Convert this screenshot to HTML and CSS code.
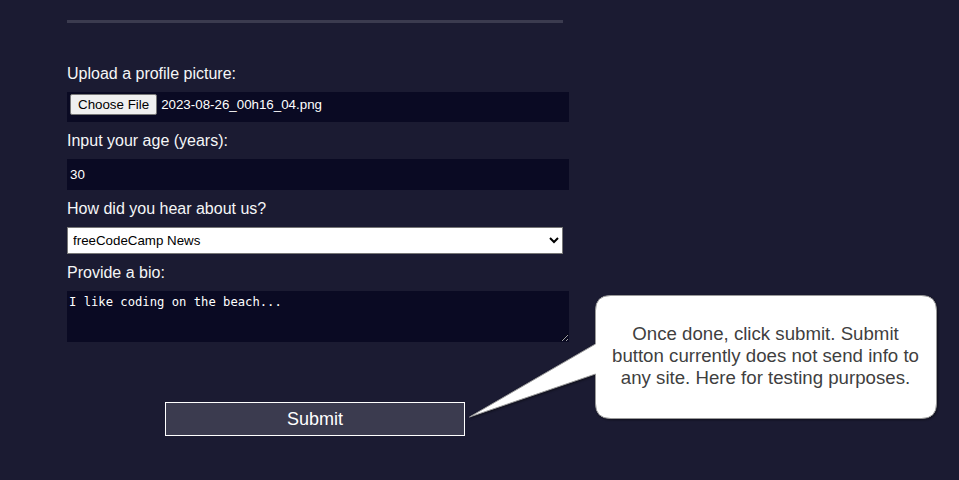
FILE: index.html
```html
<!DOCTYPE html>
<html lang="en">
<head>
<meta charset="utf-8">
<title>Survey form</title>
<link rel="stylesheet" href="styles.css">
</head>
<body>
<main class="page">
  <form class="form">
    <hr class="rule">
    <div class="field first">
      <label class="label">Upload a profile picture:</label>
      <div class="file">
        <span class="file-btn">Choose File</span>
        <span class="file-name">2023-08-26_00h16_04.png</span>
      </div>
    </div>
    <div class="field">
      <label class="label" for="age">Input your age (years):</label>
      <input class="dark-input" id="age" type="text" value="30">
    </div>
    <div class="field">
      <label class="label" for="ref">How did you hear about us?</label>
      <select class="select" id="ref">
        <option>freeCodeCamp News</option>
      </select>
    </div>
    <div class="field">
      <label class="label" for="bio">Provide a bio:</label>
      <textarea class="bio" id="bio">I like coding on the beach...</textarea>
    </div>
    <button class="submit" type="button">Submit</button>
  </form>
  <div class="callout">
    <svg class="callout-shape" width="485" height="135" viewBox="0 0 485 135">
      <path d="M150.5,5.5 H461.5 Q476.5,5.5 476.5,20.5 V113.5 Q476.5,128.5 461.5,128.5 H150.5 Q135.5,128.5 135.5,113.5 V84 L9.5,127 L135.5,54 V20.5 Q135.5,5.5 150.5,5.5 Z" fill="#ffffff" stroke="#9a9a9a" stroke-width="1"/>
    </svg>
    <p class="callout-text">Once done, click submit. Submit button currently does not send info to any site. Here for testing purposes.</p>
  </div>
</main>
</body>
</html>
```

FILE: styles.css
```css
html, body {
  margin: 0;
  padding: 0;
}

body {
  background: #1b1b32;
  font-family: "Liberation Sans", Arial, sans-serif;
  color: #f5f6f7;
  height: 480px;
  overflow: hidden;
}

.page {
  position: relative;
  padding: 20px 0 0 67px;
}

.form {
  width: 496px;
}

.rule {
  margin: 0;
  border: none;
  height: 3px;
  background: #3b3b4f;
}

.field {
  margin-bottom: 10px;
}

.field.first {
  margin-top: 42px;
}

.label {
  display: block;
  font-size: 16px;
  line-height: 18px;
  margin-bottom: 9px;
  color: #f5f6f7;
}

.file {
  width: 502px;
  height: 30px;
  box-sizing: border-box;
  background: #0a0a23;
  display: flex;
  align-items: flex-start;
  padding: 2px 0 0 3px;
  gap: 4px;
}

.file-btn {
  display: inline-block;
  box-sizing: border-box;
  height: 21px;
  line-height: 19px;
  padding: 0 7px;
  font-size: 13.33px;
  color: #000;
  background: #efefef;
  border: 1px solid #767676;
  border-radius: 2px;
}

.file-name {
  font-size: 13.33px;
  line-height: 21px;
  color: #ffffff;
}

.dark-input {
  display: block;
  box-sizing: border-box;
  width: 502px;
  height: 31px;
  margin: 0;
  padding: 0 3px;
  border: none;
  background: #0a0a23;
  color: #ffffff;
  font-family: "Liberation Sans", Arial, sans-serif;
  font-size: 13.33px;
  outline: none;
}

.select {
  display: block;
  box-sizing: border-box;
  width: 496px;
  height: 27px;
  margin: 0;
  padding: 0 1px;
  border: 1px solid #767676;
  border-radius: 0;
  background: #ffffff;
  color: #000;
  font-family: "Liberation Sans", Arial, sans-serif;
  font-size: 13.33px;
}

.bio {
  display: block;
  box-sizing: border-box;
  width: 502px;
  height: 51px;
  margin: 0;
  padding: 4px 2px;
  border: none;
  background: #0a0a23;
  color: #ffffff;
  font-family: "DejaVu Sans Mono", "Liberation Mono", monospace;
  font-size: 12.2px;
  line-height: 14px;
  outline: none;
}

.submit {
  display: block;
  box-sizing: border-box;
  width: 300px;
  height: 34px;
  margin: 60px 0 0 98px;
  background: #3b3b4f;
  border: 1px solid #ffffff;
  color: #ffffff;
  font-family: "Liberation Sans", Arial, sans-serif;
  font-size: 18px;
  padding: 0;
}

.callout {
  position: absolute;
  left: 460px;
  top: 290px;
  width: 485px;
  height: 135px;
}

.callout-shape {
  position: absolute;
  left: 0;
  top: 0;
  filter: drop-shadow(1px 1px 1px rgba(0, 0, 0, 0.45));
}

.callout-text {
  position: absolute;
  left: 149px;
  top: 33px;
  width: 313px;
  margin: 0;
  text-align: center;
  font-family: "Liberation Sans", Arial, sans-serif;
  font-size: 14pt;
  line-height: normal;
  color: #3f3f3f;
}
```
